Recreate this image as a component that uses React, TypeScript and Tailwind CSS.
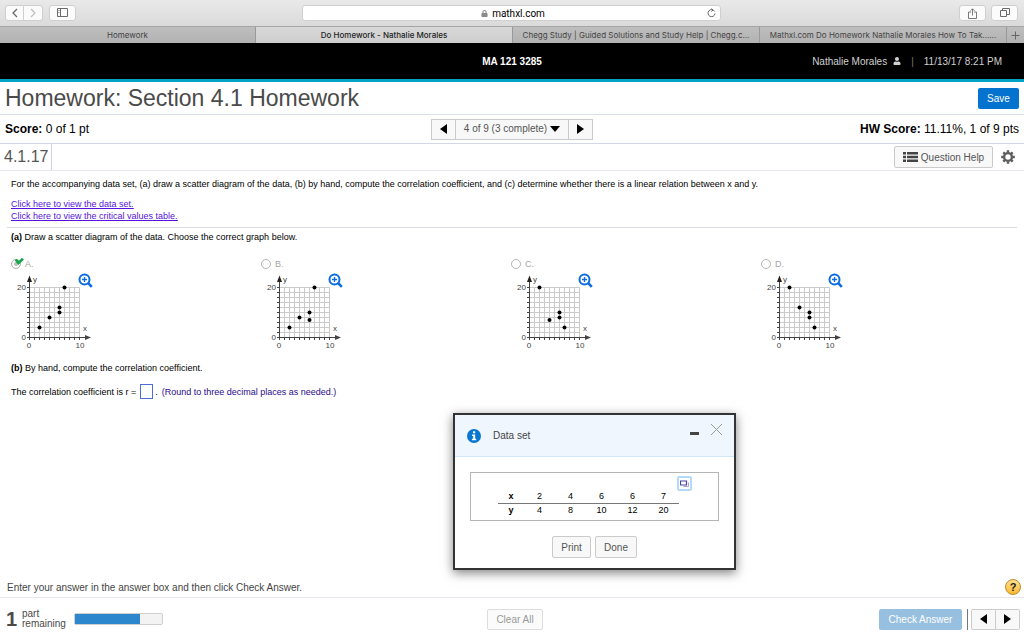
import type { ReactNode } from "react";
import { FaUser, FaLock } from "react-icons/fa";

const toolButton =
  "flex h-4 items-center justify-center rounded-[3px] border border-[#cfcfcf] bg-[#fbfbfb] text-[#6a6a6a]";
const plainButton =
  "flex items-center justify-center border border-[#cbcbcb] bg-[#f8f8f8] text-[#555]";

function BrowserToolbar() {
  return (
    <div className="flex h-[26px] items-center bg-linear-to-b from-[#e9e9e9] to-[#dadada] pr-1.5 pl-[5px]">
      <div className="flex flex-1 items-center">
        <button aria-label="Back" className={`${toolButton} w-[19px] rounded-r-none`}>
          <svg width="8" height="10" viewBox="0 0 8 10" fill="none" stroke="currentColor" strokeWidth="1.3">
            <path d="M6 1 2 5l4 4" />
          </svg>
        </button>
        <button aria-label="Forward" className={`${toolButton} w-[19px] rounded-l-none border-l-0`}>
          <svg width="8" height="10" viewBox="0 0 8 10" fill="none" stroke="#bdbdbd" strokeWidth="1.2">
            <path d="m2 1 4 4-4 4" />
          </svg>
        </button>
        <button aria-label="Show sidebar" className={`${toolButton} ml-1.5 w-[27px]`}>
          <svg width="12" height="10" viewBox="0 0 12 10" fill="none" stroke="currentColor">
            <path d="M.5.5h10v8H.5zM3.500.5v8M1.500 2.500h1M1.500 4.500h1" />
          </svg>
        </button>
      </div>
      <div className="flex h-4 w-[41.3%] items-center rounded-[3px] border border-[#cfcfcf] bg-white px-1 font-[Roboto,sans-serif] text-[10px] text-black">
        <span className="flex flex-1 items-center justify-center gap-1 pl-3">
          <FaLock className="text-[#8a8a8a]" size={7} />
          mathxl.com
        </span>
        <button aria-label="Reload">
          <svg width="9" height="10" viewBox="0 0 9 10" fill="none" stroke="#666">
            <path d="M7.600 3.500A3.500 3.500 0 1 0 8 5.500" />
            <path d="M4.500.500 6 2 4.500 3.700" />
          </svg>
        </button>
      </div>
      <div className="flex flex-1 items-center justify-end gap-[5px]">
        <button aria-label="Share" className={`${toolButton} w-[27px]`}>
          <svg width="9" height="11" viewBox="0 0 9 11" fill="none" stroke="currentColor" strokeWidth=".9">
            <path d="M3 4H.5v6.500h8V4H6M4.500 7.500V1M2.500 2.800 4.500.8l2 2" />
          </svg>
        </button>
        <button aria-label="Show tabs" className={`${toolButton} w-[27px]`}>
          <svg width="10" height="10" viewBox="0 0 10 10" fill="none" stroke="currentColor">
            <path d="M.5 2.500h6v6h-6zM2.500 2.500v-2h7v6h-3" />
          </svg>
        </button>
      </div>
    </div>
  );
}

const tabs = [
  "Homework",
  "Do Homework - Nathalie Morales",
  "Chegg Study | Guided Solutions and Study Help | Chegg.c...",
  "Mathxl.com Do Homework Nathalie Morales How To Tak......",
];

function BrowserTabs() {
  return (
    <div className="grid h-[17px] grid-cols-[256fr_257fr_247fr_247fr_17px] border-t border-[#a5a5a5] font-[Inter,sans-serif] text-[8px]">
      {tabs.map((title, i) => (
        <button
          key={title}
          className={
            i === 1
              ? "truncate border-r border-[#999] bg-linear-to-b from-[#d8d8d8] to-[#cecece] font-medium text-[#222]"
              : "truncate border-r border-[#999] bg-linear-to-b from-[#bebebe] to-[#b2b2b2] text-[#444]"
          }
        >
          {title}
        </button>
      ))}
      <button aria-label="New tab" className="flex items-center justify-center bg-linear-to-b from-[#bebebe] to-[#b2b2b2]">
        <svg width="9" height="9" viewBox="0 0 9 9" stroke="#666">
          <path d="M4.500.500v8M.5 4.500h8" />
        </svg>
      </button>
    </div>
  );
}

function Triangle({ dir }: { dir: "left" | "right" | "down" }) {
  const shape = { left: "M7 0v10L0 5z", right: "M0 0v10l7-5z", down: "M0 2h10L5 8z" }[dir];
  return (
    <svg width={dir === "down" ? 10 : 7} height="10" fill="#000" aria-hidden="true">
      <path d={shape} />
    </svg>
  );
}

function Gear() {
  return (
    <svg width="14" height="14" viewBox="-7 -7 14 14" fill="none" stroke="#5c5c5c">
      <circle r="3.900" strokeWidth="2.400" />
      <path
        strokeWidth="2.400"
        d="M0-4.500V-6.800M0 4.500V6.800M-4.500 0H-6.800M4.500 0H6.800M3.200-3.200 4.700-4.700M-3.200-3.200-4.700-4.700M3.200 3.200 4.700 4.700M-3.200 3.200-4.700 4.700"
      />
    </svg>
  );
}

type Point = [number, number];

const choices: { label: string; chosen: boolean; points: Point[] }[] = [
  { label: "A.", chosen: true, points: [[2, 4], [4, 8], [6, 10], [6, 12], [7, 20]] },
  { label: "B.", chosen: false, points: [[2, 4], [4, 8], [6, 7], [6, 10], [7, 20]] },
  { label: "C.", chosen: false, points: [[2, 20], [4, 7], [6, 8], [6, 10], [7, 4]] },
  { label: "D.", chosen: false, points: [[2, 20], [4, 12], [6, 8], [6, 10], [7, 4]] },
];

const steps = Array.from({ length: 11 }, (_, i) => i * 5);

function ScatterPlot({ points }: { points: Point[] }) {
  return (
    <svg width="84" height="80" viewBox="0 0 84 80" className="font-['Liberation_Sans',sans-serif] text-[8px]" fill="#444">
      {steps.map((s) => (
        <path key={s} d={`M${18.5 + s} 17.500v50M18.500 ${17.5 + s}h50`} stroke="#cacaca" />
      ))}
      {steps.map((s) => (
        <path key={s} d={`M${18.5 + s} 67v3M16 ${17.5 + s}h3`} stroke="#444" />
      ))}
      <path d="M18.500 69V9M17 67.500h61" stroke="#444" fill="none" />
      <path d="M18.500 5.500 21 12h-5z" fill="#222" />
      <path d="M80 67.500 74 65v5z" />
      {points.map(([x, y]) => (
        <circle key={`${x}-${y}`} cx={18.5 + x * 5} cy={67.5 - y * 2.5} r="2" fill="#000" />
      ))}
      <text x="22" y="12">y</text>
      <text x="72" y="61">x</text>
      <text x="15" y="20" textAnchor="end">20</text>
      <text x="15" y="70" textAnchor="end">0</text>
      <text x="18" y="78" textAnchor="middle">0</text>
      <text x="69" y="78" textAnchor="middle">10</text>
    </svg>
  );
}

function Choice({ label, chosen, points }: { label: string; chosen: boolean; points: Point[] }) {
  return (
    <div>
      <label className="relative flex h-3 items-center gap-1 text-[9px] text-[#a5a5a5]">
        <input
          type="radio"
          name="graph"
          defaultChecked={chosen}
          className="size-[10px] appearance-none rounded-full border border-[#b5b5b5] bg-white checked:bg-[#bbb] checked:shadow-[inset_0_0_0_2px_#fff]"
        />
        {label}
        {chosen && (
          <svg width="9" height="8" viewBox="0 0 9 8" className="absolute top-0 left-1" fill="none" stroke="#18a84c" strokeWidth="2.800">
            <path d="M.8 1.500 3.500 5 8 .8" />
          </svg>
        )}
      </label>
      <div className="relative w-[84px]">
        <ScatterPlot points={points} />
        <button aria-label={`Enlarge graph ${label}`} className="absolute top-[3px] left-[67px]">
          <svg width="15" height="15" viewBox="0 0 15 15" fill="none" stroke="#0b6be0">
            <circle cx="6.500" cy="6.500" r="5" strokeWidth="2" />
            <path d="M6.500 4v5M4 6.500h5" strokeWidth="1.300" />
            <path d="m10.200 10.200 3.600 3.600" strokeWidth="2.600" />
          </svg>
        </button>
      </div>
    </div>
  );
}

const dataRows: { name: string; values: number[] }[] = [
  { name: "x", values: [2, 4, 6, 6, 7] },
  { name: "y", values: [4, 8, 10, 12, 20] },
];

function DataSetDialog() {
  return (
    <div
      role="dialog"
      aria-label="Data set"
      className="absolute top-[413px] left-[453px] w-[283px] border-2 border-[#333] bg-white pb-2.5 shadow-[0_3px_10px_rgba(0,0,0,0.5)]"
    >
      <header className="flex h-[42px] items-center border-b border-[#cfe8fb] bg-[#f0f6fe] px-3">
        <svg width="14" height="14" viewBox="0 0 14 14">
          <circle cx="7" cy="7" r="7" fill="#0877d2" />
          <path d="M6 2.300h2.200v2H6zM5 5.500h3.200v4.300h1v1.400H4.900V9.800h1.200V6.900H5z" fill="#fff" />
        </svg>
        <h2 className="ml-3 flex-1 text-[10px] text-[#444]">Data set</h2>
        <button aria-label="Minimize" className="mr-3 mb-1">
          <svg width="9" height="3" fill="#444">
            <path d="M0 0h9v3H0z" />
          </svg>
        </button>
        <button aria-label="Close" className="mb-3">
          <svg width="11" height="11" viewBox="0 0 11 11" stroke="#999">
            <path d="m0 0 11 11M11 0 0 11" />
          </svg>
        </button>
      </header>
      <div className="relative mx-[15px] mt-[15px] flex h-[49px] items-end border border-[#b5b5b5] pb-[3px] pl-[27px]">
        <table className="w-[181px] table-fixed text-center text-[9px] leading-[13px] text-black">
          <tbody>
            {dataRows.map(({ name, values }) => (
              <tr key={name} className="border-[#777] not-last:border-b">
                <th scope="row" className="w-[26px]">{name}</th>
                {values.map((v, i) => (
                  <td key={i}>{v}</td>
                ))}
              </tr>
            ))}
          </tbody>
        </table>
        <button aria-label="Copy data" className="absolute top-[3px] right-[26px] flex size-[15px] items-center justify-center rounded-xs border-2 border-[#b4dafa] bg-white">
          <svg width="9" height="8" viewBox="0 0 9 8" fill="none">
            <path d="M3.500 6.500h5v-4" stroke="#aaa4d4" />
            <path d="M.5 1h6v4h-6z" stroke="#4b46a8" strokeWidth="1.200" />
          </svg>
        </button>
      </div>
      <div className="mt-[15px] flex justify-center gap-1 text-[10px]">
        <button className={`${plainButton} h-[22px] w-[39px] rounded-xs`}>Print</button>
        <button className={`${plainButton} h-[22px] w-[42px] rounded-xs`}>Done</button>
      </div>
    </div>
  );
}

function Question({ children }: { children: ReactNode }) {
  return <main className="flex-1 px-[7px] text-[9px] leading-3 text-black">{children}</main>;
}

export default function App() {
  return (
    <div className="relative flex min-h-screen flex-col bg-white font-['Liberation_Sans',Arial,sans-serif]">
      <BrowserToolbar />
      <BrowserTabs />
      <header className="grid h-[39px] grid-cols-3 items-center border-b-3 border-[#05a0c5] bg-black px-[22px] text-[10px] text-[#d0d0d0]">
        <span className="col-start-2 text-center font-bold text-white">MA 121 3285</span>
        <div className="flex items-center justify-end">
          Nathalie Morales
          <FaUser size={8} className="ml-1.5" />
          <span className="mx-2.5 text-[#777]">|</span>
          11/13/17 8:21 PM
        </div>
      </header>
      <div className="flex h-[33px] items-center justify-between border-b border-[#d9e0ea] px-[5px]">
        <h1 className="text-[23px] leading-8 text-[#4a4a4a]">Homework: Section 4.1 Homework</h1>
        <button className="h-[21px] w-[41px] rounded-xs bg-[#0473d0] text-[10px] text-white">Save</button>
      </div>
      <div className="grid h-[29px] grid-cols-3 items-center border-b border-[#d3d6e4] px-[5px] text-xs text-black">
        <p><b>Score:</b> 0 of 1 pt</p>
        <nav className="flex h-[21px] justify-center text-[10px]">
          <button aria-label="Previous question" className={`${plainButton} w-[25px]`}>
            <Triangle dir="left" />
          </button>
          <button className={`${plainButton} w-[112px] gap-[3px] border-x-0`}>
            4 of 9 (3 complete)
            <Triangle dir="down" />
          </button>
          <button aria-label="Next question" className={`${plainButton} w-[25px]`}>
            <Triangle dir="right" />
          </button>
        </nav>
        <p className="text-right"><b>HW Score:</b> 11.11%, 1 of 9 pts</p>
      </div>
      <div className="flex h-[27px] items-center border-b border-[#e6e6ee] pr-[9px] pl-1">
        <h2 className="flex h-full w-12 items-center border-r border-[#d0d3de] text-base text-[#555]">4.1.17</h2>
        <button className={`${plainButton} ml-auto h-[22px] w-[99px] gap-[3px] rounded-xs text-[10px]`}>
          <svg width="15" height="10" viewBox="0 0 15 10" fill="#444">
            <path d="M0 0h3v2.500H0zM4 0h11v2.500H4zM0 3.700h3v2.500H0zM4 3.700h11v2.500H4zM0 7.500h3V10H0zM4 7.500h11V10H4z" />
          </svg>
          Question Help
        </button>
        <button aria-label="Settings" className="ml-2"><Gear /></button>
      </div>
      <Question>
        <div className="border-b border-[#d9dce4] px-1 pt-[7px] pb-[5px]">
          <p>
            For the accompanying data set, (a) draw a scatter diagram of the data, (b) by hand, compute the correlation
            coefficient, and (c) determine whether there is a linear relation between x and y.
          </p>
          <p className="mt-2 text-[#5512e0] underline"><a href="#data">Click here to view the data set.</a></p>
          <p className="text-[#5512e0] underline"><a href="#critical">Click here to view the critical values table.</a></p>
        </div>
        <div className="px-1 pt-[3px]">
          <p><b>(a)</b> Draw a scatter diagram of the data. Choose the correct graph below.</p>
          <div className="mt-[15px] mr-0.5 grid grid-cols-4">
            {choices.map((c) => (
              <Choice key={c.label} {...c} />
            ))}
          </div>
          <p className="mt-3"><b>(b)</b> By hand, compute the correlation coefficient.</p>
          <div className="mt-2.5 flex items-center">
            <label htmlFor="r">The correlation coefficient is r =</label>
            <input id="r" className="ml-1 mr-0.5 h-[15px] w-[13px] border border-[#4a6fd8] bg-white" />
            <span>.</span>
            <span className="ml-1 text-[#2a0a8c]">(Round to three decimal places as needed.)</span>
          </div>
        </div>
      </Question>
      <div className="flex h-[21px] items-center justify-between border-b border-[#e6e6ee] pr-[3px] pl-[7px] text-[10px] text-[#444]">
        <p>Enter your answer in the answer box and then click Check Answer.</p>
        <button aria-label="Help" className="size-4 rounded-full border border-[#b98e2c] bg-linear-to-b from-[#ffe28a] to-[#fbb829] text-[11px] leading-[14px] font-bold text-[#222]">?</button>
      </div>
      <footer className="grid h-[42px] grid-cols-3 items-center pr-1 pl-1.5 text-[10px] text-[#4a4a4a]">
        <div className="flex items-center">
          <b className="w-4 text-xl">1</b>
          <p className="leading-[10px]">part<br />remaining</p>
          <div className="ml-2 h-3 w-[89px] rounded-xs border border-[#cfcfcf] bg-[#f3f3f3]">
            <div className="h-full w-3/4 bg-[#2d87cd]" />
          </div>
        </div>
        <button className="ml-1 h-[21px] w-14 justify-self-center rounded-xs border border-[#ddd] bg-[#fbfbfb] text-[#999]">Clear All</button>
        <div className="flex h-[21px] items-stretch justify-end">
          <button className="w-[83px] rounded-xs bg-[#97c0e0] text-white">Check Answer</button>
          <div className="mr-[3px] ml-[5px] w-px bg-[#777]" />
          <button aria-label="Previous part" className={`${plainButton} w-[25px] rounded-l-xs`}>
            <Triangle dir="left" />
          </button>
          <button aria-label="Next part" className={`${plainButton} w-6 rounded-r-xs border-l-0`}>
            <Triangle dir="right" />
          </button>
        </div>
      </footer>
      <DataSetDialog />
    </div>
  );
}
